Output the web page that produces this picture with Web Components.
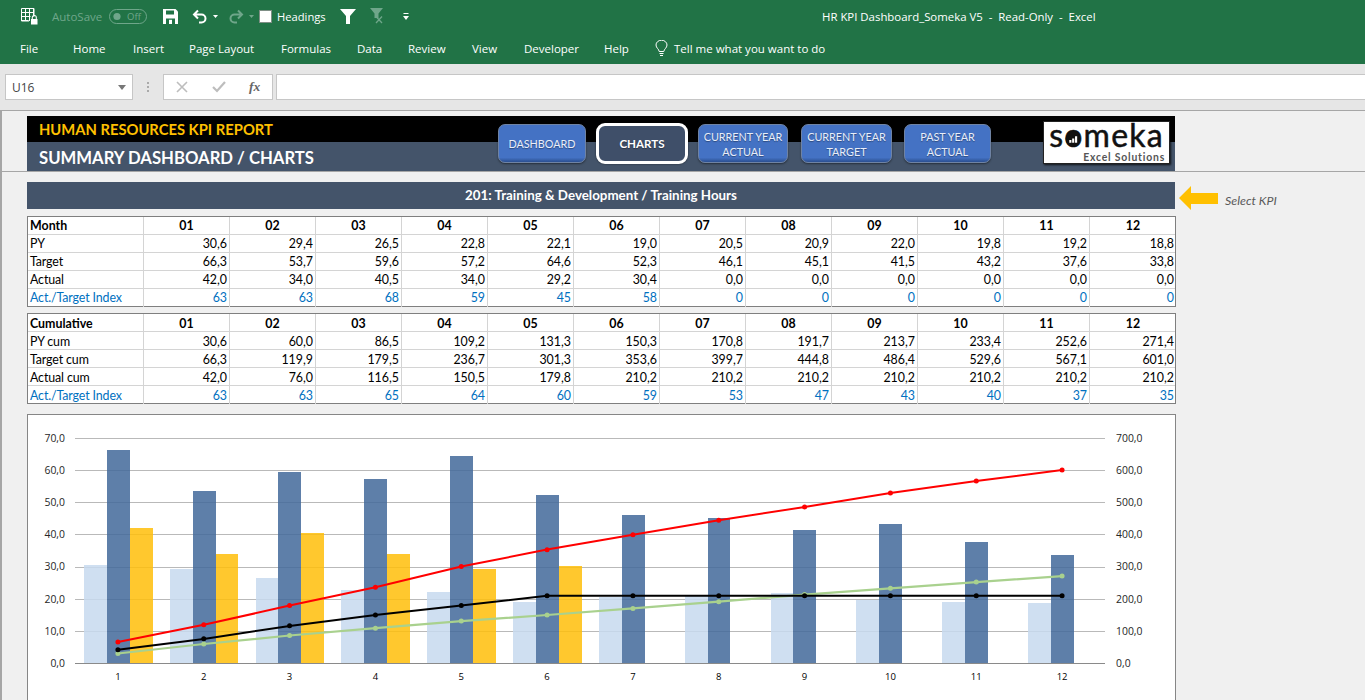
<!DOCTYPE html>
<html><head><meta charset="utf-8"><title>HR KPI Dashboard</title>
<style>
html,body{margin:0;padding:0;height:700px;overflow:hidden;background:#f0f0f0}
body{font-family:"Open Sans","Noto Sans",sans-serif;display:flex;flex-direction:column}
</style></head><body>
<xl-ribbon></xl-ribbon>
<xl-formula-bar></xl-formula-bar>
<xl-sheet>
  <kpi-header></kpi-header>
  <kpi-selector>201: Training &amp; Development / Training Hours</kpi-selector>
  <kpi-table title-text="Month" style="margin-top:7px"
    rows='[["PY",[30.6,29.4,26.5,22.8,22.1,19.0,20.5,20.9,22.0,19.8,19.2,18.8]],["Target",[66.3,53.7,59.6,57.2,64.6,52.3,46.1,45.1,41.5,43.2,37.6,33.8]],["Actual",[42.0,34.0,40.5,34.0,29.2,30.4,0,0,0,0,0,0]],["Act./Target Index",[63,63,68,59,45,58,0,0,0,0,0,0],1]]'></kpi-table>
  <kpi-table title-text="Cumulative" style="margin-top:6px;--pt:1px"
    rows='[["PY cum",[30.6,60.0,86.5,109.2,131.3,150.3,170.8,191.7,213.7,233.4,252.6,271.4]],["Target cum",[66.3,119.9,179.5,236.7,301.3,353.6,399.7,444.8,486.4,529.6,567.1,601.0]],["Actual cum",[42.0,76.0,116.5,150.5,179.8,210.2,210.2,210.2,210.2,210.2,210.2,210.2]],["Act./Target Index",[63,63,65,64,60,59,53,47,43,40,37,35],1]]'></kpi-table>
  <kpi-chart></kpi-chart>
</xl-sheet>
<script>
const mk=(name,html,init)=>customElements.define(name,class extends HTMLElement{
  constructor(){super();const t=document.createElement('template');t.innerHTML=html;this.attachShadow({mode:'open'}).appendChild(t.content.cloneNode(true));}
  connectedCallback(){if(init)init(this,this.shadowRoot);}
});

mk('xl-ribbon',`<style>
:host{display:block;height:64px;background:#217346;color:#fff;font-family:"Open Sans","Noto Sans",sans-serif;font-size:11.5px;flex:none}
.qat{display:flex;height:32px;align-items:center;position:relative}
.qat>*{flex:none}
.dim{color:#6fa68a}
.title{position:absolute;left:822px;top:9px;font-size:11.4px;white-space:pre}
.tabs{display:flex;height:32px;align-items:center;font-size:11.5px}
.tabs span{flex:none;white-space:nowrap}
svg{display:block}
</style>
<div class="qat">
 <svg style="margin-left:21px" width="17" height="17" viewBox="0 0 17 17" fill="none" stroke="#fff"><path d="M.5 .5h12.5v8M.5 .5v12.5h7.5M.5 4.5h12.5M.5 8.5h9M.5 12.5h7M4.5 .5v12.5M8.5 .5v12.5M12.5 .5v8"/><rect x="10" y="11" width="6.5" height="5.5" fill="#fff" stroke="none"/><path d="M11.3 11v-1.5a2 2 0 0 1 4 0v1.5" stroke-width="1.1"/></svg>
 <span class="dim" style="margin-left:14px;width:57px;font-size:11.5px">AutoSave</span>
 <svg width="38" height="15" viewBox="0 0 38 15" fill="none" stroke="#6fa68a"><rect x=".5" y=".5" width="37" height="14" rx="7"/><circle cx="8" cy="7.5" r="3.6" fill="#6fa68a" stroke="none"/></svg>
 <span class="dim" style="margin-left:-20px;width:20px;font-size:9.5px">Off</span>
 <svg style="margin-left:16px" width="15" height="15" viewBox="0 0 15 15"><path fill="#fff" d="M0 0h12.5L15 2.5V15H0z"/><path fill="#217346" d="M3 1.6h8v4H3zM3 9.5h9v5.5H3z"/><path fill="#fff" d="M6 10.8h3V15H6z"/></svg>
 <svg style="margin-left:14px" width="16" height="15" viewBox="0 0 16 15" fill="none" stroke="#fff" stroke-width="2"><path d="M6 1.5 2 5.5l4 4M2 5.5h7.5a4 4 0 0 1 0 8H7"/></svg>
 <svg style="margin-left:5px" width="5" height="3" viewBox="0 0 5 3"><path fill="#fff" d="M0 0h5L2.5 3z"/></svg>
 <svg style="margin-left:10px" width="16" height="15" viewBox="0 0 16 15" fill="none" stroke="#6fa68a" stroke-width="2"><path d="M10 1.5l4 4-4 4M14 5.5H6.5a4 4 0 0 0 0 8H9"/></svg>
 <svg style="margin-left:5px" width="5" height="3" viewBox="0 0 5 3"><path fill="#6fa68a" d="M0 0h5L2.5 3z"/></svg>
 <span style="margin-left:5px;width:13px;height:13px;background:#fff;border:1px solid #7f8f86;box-sizing:border-box"></span>
 <span style="margin-left:5px;width:63px;font-size:11.2px">Headings</span>
 <svg width="16" height="15" viewBox="0 0 16 15"><path fill="#fff" d="M0 0h16L10 7v8H6V7z"/></svg>
 <svg style="margin-left:14px" width="17" height="17" viewBox="0 0 17 17"><path fill="#6fa68a" d="M0 0h13L8.5 5.5V10h-4V5.5z"/><path stroke="#6fa68a" stroke-width="1.3" d="M6 8.5 12 15M12 8.5 6 15"/></svg>
 <svg style="margin-left:16px" width="6" height="7" viewBox="0 0 6 7"><path fill="#fff" d="M.5 0h5v1h-5zM0 3h6L3 7z"/></svg>
 <span class="title">HR KPI Dashboard_Someka V5  -  Read-Only  -  Excel</span>
</div>
<div class="tabs">
 <span style="margin-left:20px;width:53px">File</span><span style="width:60px">Home</span><span style="width:56px">Insert</span><span style="width:92px">Page Layout</span><span style="width:76px">Formulas</span><span style="width:51px">Data</span><span style="width:64px">Review</span><span style="width:52px">View</span><span style="width:80px">Developer</span><span style="width:51px">Help</span>
 <svg width="13" height="16" viewBox="0 0 13 16" fill="none" stroke="#fff"><path d="M4.2 11.5C4 9 1 8 1 5a5.5 4.8 0 0 1 11 0c0 3-3 4-3.2 6.5zM4.5 13.5h4M5 15.5h3"/></svg>
 <span style="margin-left:6px">Tell me what you want to do</span>
</div>`);

mk('xl-formula-bar',`<style>
:host{display:flex;height:46px;background:#e6e6e6;padding:10px 0 0 5px;box-sizing:border-box;flex:none;font-family:"Open Sans","Noto Sans",sans-serif}
.box{height:26px;background:#fff;border:1px solid #c6c6c6;box-sizing:border-box;display:flex;align-items:center;flex:none}
.name{width:128px;font-size:12px;color:#444;padding:0 6px;justify-content:space-between}
.dots{width:30px;height:26px;display:flex;flex-direction:column;align-items:center;justify-content:center;gap:2px;flex:none}
.dots i{width:2px;height:2px;background:#aaa;display:block}
.fx{width:110px;padding:0 0 0 12px}
.input{flex:1;margin-left:3px;border-right:0}
.f{font:italic 700 13.5px "Liberation Serif",serif;color:#666;margin-left:23px}
svg{display:block;flex:none}
</style>
<div class="box name"><span>U16</span><svg width="8" height="5" viewBox="0 0 8 5"><path fill="#777" d="M0 0h8L4 5z"/></svg></div>
<div class="dots"><i></i><i></i><i></i></div>
<div class="box fx">
 <svg width="12" height="12" viewBox="0 0 12 12" stroke="#bdbdbd" stroke-width="1.6"><path d="M1 1l10 10M11 1 1 11"/></svg>
 <svg style="margin-left:24px" width="14" height="12" viewBox="0 0 14 12" fill="none" stroke="#bdbdbd" stroke-width="2.2"><path d="M1 6l4 4 8-9"/></svg>
 <span class="f">fx</span>
</div>
<div class="box input"></div>`);

mk('xl-sheet',`<style>
:host{display:block;flex:1;min-height:0;overflow:hidden;background:#f0f0f0;border-top:1px solid #a6a6a6;border-left:2px solid #a6a6a6;padding:5px 0 0 25px;box-sizing:border-box;font-family:Lato,"Liberation Sans",sans-serif}
</style><slot></slot>`);

mk('btn-x',`<style>
:host{display:flex;align-items:center;justify-content:center;text-align:center;box-sizing:border-box;flex:none;height:39px;border-radius:7px;
 background:linear-gradient(#4472c4 0 88%,#2b4f90);border:1px solid #6f83a4;color:#e8eefa;font:10.8px/15px "Lato",sans-serif;box-shadow:0 1px 2px rgba(0,0,0,.45);text-shadow:0 1px 1px rgba(0,0,0,.35)}
:host([active]){height:41px;background:#3f4f69;border:3px solid #fff;border-radius:9px;font-weight:700;font-size:11.6px;color:#fff;box-shadow:0 0 2px rgba(0,0,0,.6)}
</style><slot></slot>`);

mk('kpi-header',`<style>
:host{display:flex;align-items:center;width:1148px;height:55px;background:linear-gradient(#000 26px,#44546a 26px);box-sizing:border-box;position:relative;font-family:Lato,sans-serif}
.t{width:471px;flex:none;padding-left:12px;box-sizing:border-box;font-weight:700;align-self:stretch}
.a{height:26px;line-height:27px;color:#ffc000;font-size:14.75px}
.b{height:29px;line-height:33px;color:#fff;font-size:16.7px}
.btns{display:flex;align-items:center;gap:10px;flex:none}
.logo{margin-left:52px;margin-top:-2px;width:127px;height:43px;background:#fff;border:1px solid #222;box-shadow:1px 1px 2px rgba(0,0,0,.8);box-sizing:border-box;flex:none;display:flex;flex-direction:column;align-items:center}
.s{font:400 32px/26px Lato,sans-serif;color:#111;letter-spacing:1.2px;height:26px;-webkit-text-stroke:.5px #111;white-space:nowrap}
.o{position:relative;display:inline-block}
.o svg{position:absolute;left:1.2px;top:9.4px;width:16px;height:16px}
.e{align-self:flex-end;font:700 10.4px/11px Lato,sans-serif;color:#555;letter-spacing:.8px;margin:4px 4px 0 0;white-space:nowrap}
</style>
<div class="t"><div class="a">HUMAN RESOURCES KPI REPORT</div><div class="b">SUMMARY DASHBOARD / CHARTS</div></div>
<div class="btns">
<btn-x style="width:88px">DASHBOARD</btn-x>
<btn-x active style="width:92px">CHARTS</btn-x>
<btn-x style="width:90px">CURRENT YEAR<br>ACTUAL</btn-x>
<btn-x style="width:91px;margin-left:3px">CURRENT YEAR<br>TARGET</btn-x>
<btn-x style="width:87px;margin-left:2px">PAST YEAR<br>ACTUAL</btn-x>
</div>
<div class="logo"><div class="s">s<span class="o">o<svg viewBox="0 0 15 15"><circle cx="7.5" cy="7.5" r="7" fill="#111"/><path fill="#fff" d="M4 8.5h2v2.5H4zM6.7 7h2v4h-2zM9.4 5h2v6h-2z"/></svg></span>meka</div><div class="e">Excel Solutions</div></div>`);

mk('kpi-selector',`<style>
:host{display:block;position:relative;width:1148px;height:27px;margin-top:11px;background:#44546a;color:#fff;text-align:center;font:700 13.35px/27px Lato,sans-serif}
:host::before{content:"";position:absolute;left:-27px;top:-11px;height:1px;background:#a6a6a6;width:1400px}
.hint{position:absolute;left:1152px;top:4px;display:flex;align-items:center;gap:7px;font:italic 400 12.4px Lato,sans-serif;color:#595959;white-space:nowrap}
</style><slot></slot>
<div class="hint"><svg width="39" height="24" viewBox="0 0 39 24"><path fill="#ffc000" d="M0 12 12 0v7h27v11H12v6z"/></svg><span style="padding-top:5px">Select KPI</span></div>`);

mk('kpi-table',`<style>
:host{display:grid;grid-template-columns:116px repeat(11,86px) 85px;grid-auto-rows:18px;width:1149px;box-sizing:border-box;border:1px solid #7f7f7f;background:#fff;color:#000;font:12.4px/17px Lato,sans-serif}
div{border-right:1px solid #d4d4d4;border-bottom:1px solid #d4d4d4;box-sizing:border-box;padding:var(--pt,0) 2px 0 2px;text-align:right;white-space:nowrap;overflow:hidden}
.l{text-align:left;letter-spacing:-.12px}.h{font-weight:700;text-align:center}.h.l{text-align:left;letter-spacing:0}.i{color:#0070c0}
.e{border-right:0;padding-right:1px}.z{border-bottom:0}
</style>`,(el,root)=>{
  const rows=JSON.parse(el.getAttribute('rows'));let h='';
  h+=`<div class="h l">${el.getAttribute('title-text')}</div>`;
  for(let i=1;i<=12;i++)h+=`<div class="h${i==12?' e':''}">${String(i).padStart(2,'0')}</div>`;
  rows.forEach((r,ri)=>{const last=ri==rows.length-1?' z':'';const idx=r[2]?' i':'';
    h+=`<div class="l${idx}${last}">${r[0]}</div>`;
    r[1].forEach((v,i)=>{const t=r[2]?String(v):v.toFixed(1).replace('.',',');h+=`<div class="${idx}${last}${i==11?' e':''}">${t}</div>`;});
  });
  const w=document.createElement('template');w.innerHTML=h;root.appendChild(w.content);
  el.style.height='91px';
});

mk('kpi-chart',`<style>
:host{display:block;width:1149px;height:290px;margin-top:10px;background:#fff;border:1px solid #868686;box-sizing:border-box}
svg{display:block;font:10.4px "Open Sans",sans-serif;fill:#262626}
</style><svg width="1147" height="288" viewBox="28 415 1147 288"></svg>`,(el,root)=>{
  const py=[30.6,29.4,26.5,22.8,22.1,19.0,20.5,20.9,22.0,19.8,19.2,18.8],
  tg=[66.3,53.7,59.6,57.2,64.6,52.3,46.1,45.1,41.5,43.2,37.6,33.8],
  ac=[42.0,34.0,40.5,34.0,29.2,30.4,0,0,0,0,0,0],
  pc=[30.6,60.0,86.5,109.2,131.3,150.3,170.8,191.7,213.7,233.4,252.6,271.4],
  tc=[66.3,119.9,179.5,236.7,301.3,353.6,399.7,444.8,486.4,529.6,567.1,601.0],
  cc=[42.0,76.0,116.5,150.5,179.8,210.2,210.2,210.2,210.2,210.2,210.2,210.2];
  const Y0=663.3,U=225/70,X0=75,CW=1030/12;
  const paleX=[84,170,256,341,427,513,599,685,771,856,942,1028],
  blueX=[107,193,278,364,450,536,622,708,793,879,965,1051],
  blueE=[130,216,301,387,473,559,645,730,816,902,988,1074],
  yelE=[153,238,324,410,496,582];
  const grid=[663,631,599,567,534,502,470,438];
  const y=v=>Y0-v*U,cx=i=>X0+CW*(i+.5);
  let s='';
  for(let g=0;g<=7;g++){const yy=y(g*10);
    if(g)s+=`<path d="M${X0} ${grid[g]+.5}H1105" stroke="#b9b9b9" stroke-width="1"/>`;
    s+=`<text x="65" y="${yy+3.5}" text-anchor="end">${g*10},0</text><text x="1116" y="${yy+3.5}">${g*100},0</text>`;}
  const bar=(x,e,v,c)=>{if(!(v>0))return '';const t=Math.round(y(v));return `<rect x="${x}" y="${t}" width="${e-x}" height="${663-t}" fill="${c}" fill-opacity=".85"/>`;};
  for(let i=0;i<12;i++){const c=cx(i);
    s+=bar(paleX[i],blueX[i],py[i],'#c7d9ee')+bar(blueX[i],blueE[i],tg[i],'#42689a')+bar(blueE[i],yelE[i],ac[i],'#ffbe09');
    s+=`<text x="${c}" y="680" text-anchor="middle" fill="#000" style="font-size:9.5px">${i+1}</text>`;}
  s+=`<path d="M${X0} 663.5H1105" stroke="#8a8a8a" stroke-width="1"/>`;
  const line=(d,col,w)=>{const p=d.map((v,i)=>cx(i).toFixed(1)+' '+(Y0-v*U/10).toFixed(1));
    s+=`<path d="M${p.join('L')}" fill="none" stroke="${col}" stroke-width="${w}"/>`;
    d.forEach((v,i)=>{s+=`<circle cx="${cx(i)}" cy="${Y0-v*U/10}" r="2.5" fill="${col}"/>`;});};
  line(pc,'#a9d18e',2.2);line(tc,'#ff0000',2);line(cc,'#000',2);
  root.querySelector('svg').innerHTML=s;
});
</script>
</body></html>
